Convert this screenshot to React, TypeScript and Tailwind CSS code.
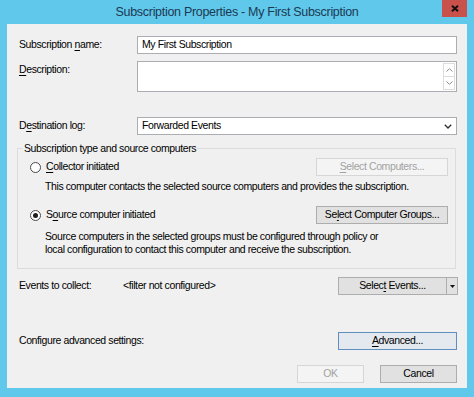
import React from "react";

const font = { fontFamily: '"Liberation Sans", Arial, sans-serif' };

function U({ children }: { children: React.ReactNode }) {
  return <span className="underline underline-offset-[2px] decoration-[1px]">{children}</span>;
}

function Radio({ checked }: { checked?: boolean }) {
  return (
    <span className="w-[11px] h-[11px] rounded-full border border-[#4a4a4a] bg-white flex items-center justify-center shrink-0">
      {checked && <span className="w-[5px] h-[5px] rounded-full bg-[#1e1e1e]" />}
    </span>
  );
}

function Btn({
  children,
  w,
  disabled,
  def,
}: {
  children: React.ReactNode;
  w: string;
  disabled?: boolean;
  def?: boolean;
}) {
  const base = "h-[18px] flex items-center justify-center border shrink-0";
  const look = disabled
    ? "bg-[#f4f4f4] border-[#d6d6d6] text-[#a2a2a2]"
    : def
    ? "bg-[#e3e9ef] border-[#5f8fc0] text-black"
    : "bg-[#e1e1e1] border-[#adadad] text-black";
  return <div className={`${base} ${look} ${w}`}>{children}</div>;
}

export default function App() {
  return (
    <div
      className="w-[474px] h-[397px] bg-[#60c8ea] flex flex-col text-[10.5px] tracking-[-0.4px] text-black overflow-hidden"
      style={font}
    >
      {/* Title bar */}
      <div className="h-[24px] relative flex items-center justify-center shrink-0">
        <span className="text-[12.5px] tracking-[-0.3px] text-[#1c3954] mt-[1px]">
          Subscription Properties - My First Subscription
        </span>
        <div className="absolute right-[7px] top-0 w-[25px] h-[17px] bg-[#c8514c] flex items-center justify-center">
          <svg width="8" height="7" viewBox="0 0 8 7">
            <path d="M1 0.8 L7 6.2 M7 0.8 L1 6.2" stroke="#111" strokeWidth="2" />
          </svg>
        </div>
      </div>

      {/* Client area */}
      <div className="mx-[7px] h-[364px] bg-[#f0f0f0] flex flex-col shrink-0">
        {/* Subscription name */}
        <div className="mt-[12px] h-[18px] flex items-center">
          <div className="w-[130px] pl-[12px]">
            Subscription <U>n</U>ame:
          </div>
          <div className="w-[320px] h-[18px] bg-white border border-[#abadb3] flex items-center pl-[4px]">
            My First Subscription
          </div>
        </div>

        {/* Description */}
        <div className="mt-[7px] h-[31px] flex items-start">
          <div className="w-[130px] pl-[12px] h-[18px] flex items-center">
            <span>
              <U>D</U>escription:
            </span>
          </div>
          <div className="w-[320px] h-[31px] bg-white border border-[#abadb3] flex justify-end">
            <div className="w-[13px] h-full flex flex-col pt-[1px] pb-[1px] pr-[1px]">
              <div className="flex-1 border border-[#dcdcdc] flex items-center justify-center">
                <svg width="7" height="4" viewBox="0 0 7 4">
                  <path d="M0.5 3.5 L3.5 0.7 L6.5 3.5" stroke="#8c8c8c" strokeWidth="1" fill="none" />
                </svg>
              </div>
              <div className="flex-1 border border-[#dcdcdc] border-t-0 flex items-center justify-center">
                <svg width="7" height="4" viewBox="0 0 7 4">
                  <path d="M0.5 0.5 L3.5 3.3 L6.5 0.5" stroke="#8c8c8c" strokeWidth="1" fill="none" />
                </svg>
              </div>
            </div>
          </div>
        </div>

        {/* Destination log */}
        <div className="mt-[25px] h-[18px] flex items-center">
          <div className="w-[130px] pl-[12px]">
            D<U>e</U>stination log:
          </div>
          <div className="w-[320px] h-[18px] bg-white border border-[#abadb3] flex items-center pl-[4px] pr-[4px] justify-between">
            <span>Forwarded Events</span>
            <svg width="8" height="5" viewBox="0 0 8 5">
              <path d="M0.8 0.8 L4 4 L7.2 0.8" stroke="#333" strokeWidth="1.4" fill="none" />
            </svg>
          </div>
        </div>

        {/* Group box */}
        <div className="mt-[13px] ml-[10px] w-[439px] h-[121px] border border-[#dcdcdc] relative flex flex-col shrink-0">
          <span className="absolute left-[5px] top-[-8px] px-[1px] bg-[#f0f0f0] leading-[14px]">
            Subscription type and source computers
          </span>
          <div className="mt-[9px] h-[18px] flex items-center pl-[12px] pr-[7px]">
            <Radio />
            <span className="ml-[5px]">
              <U>C</U>ollector initiated
            </span>
            <div className="ml-auto">
              <Btn w="w-[132px]" disabled>
                <span>
                  <U>S</U>elect Computers...
                </span>
              </Btn>
            </div>
          </div>
          <div className="mt-[3px] h-[14px] leading-[14px] pl-[27px]">
            This computer contacts the selected source computers and provides the subscription.
          </div>
          <div className="mt-[13px] h-[18px] flex items-center pl-[12px] pr-[7px]">
            <Radio checked />
            <span className="ml-[5px]">
              S<U>o</U>urce computer initiated
            </span>
            <div className="ml-auto">
              <Btn w="w-[132px]">
                <span>
                  Se<U>l</U>ect Computer Groups...
                </span>
              </Btn>
            </div>
          </div>
          <div className="mt-[6px] leading-[13px] pl-[27px]">
            <div>Source computers in the selected groups must be configured through policy or</div>
            <div>local configuration to contact this computer and receive the subscription.</div>
          </div>
        </div>

        {/* Events to collect */}
        <div className="mt-[8px] h-[18px] flex items-center">
          <div className="w-[116px] pl-[12px]">Events to collect:</div>
          <div>&lt;filter not configured&gt;</div>
          <div className="ml-auto mr-[9px] w-[120px] h-[18px] bg-[#e1e1e1] border border-[#adadad] flex">
            <div className="w-[108px] flex items-center justify-center border-r border-[#adadad]">
              <span>
                Selec<U>t</U> Events...
              </span>
            </div>
            <div className="flex-1 flex items-center justify-center">
              <svg width="5" height="3" viewBox="0 0 5 3">
                <path d="M0 0 L5 0 L2.5 3 Z" fill="#111" />
              </svg>
            </div>
          </div>
        </div>

        {/* Advanced */}
        <div className="mt-[37px] h-[18px] flex items-center">
          <div className="pl-[12px]">Configure advanced settings:</div>
          <div className="ml-auto mr-[10px]">
            <Btn w="w-[119px]" def>
              <span>
                <U>A</U>dvanced...
              </span>
            </Btn>
          </div>
        </div>

        {/* OK / Cancel */}
        <div className="mt-[15px] h-[18px] flex items-center justify-end pr-[10px] gap-[16px]">
          <Btn w="w-[67px]" disabled>
            OK
          </Btn>
          <Btn w="w-[77px]">Cancel</Btn>
        </div>
      </div>
    </div>
  );
}
